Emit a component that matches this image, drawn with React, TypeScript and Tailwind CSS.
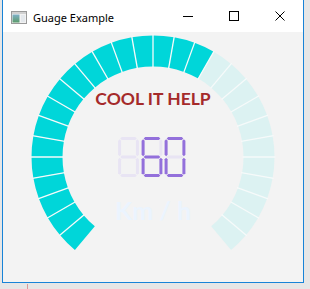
import React from "react";

const CX = 125;
const CY = 125;
const RO = 121.5;
const RI = 90.5;

function pt(r: number, deg: number): [number, number] {
  const a = (deg * Math.PI) / 180;
  return [CX + r * Math.sin(a), CY - r * Math.cos(a)];
}

function wedge(a0: number, a1: number): string {
  const [x0, y0] = pt(RO, a0);
  const [x1, y1] = pt(RO, a1);
  const [x2, y2] = pt(RI, a1);
  const [x3, y3] = pt(RI, a0);
  return `M${x0} ${y0} A${RO} ${RO} 0 0 1 ${x1} ${y1} L${x2} ${y2} A${RI} ${RI} 0 0 0 ${x3} ${y3} Z`;
}

function Gauge() {
  const segs = [] as React.ReactNode[];
  const total = 28;
  const lit = 17;
  for (let i = 0; i < total; i++) {
    const a0 = -140 + i * 10;
    segs.push(
      <path key={"s" + i} d={wedge(a0, a0 + 10)} fill={i < lit ? "#00d6d9" : "#dcf2f2"} />
    );
  }
  const lines = [] as React.ReactNode[];
  for (let k = 1; k < total; k++) {
    const a = -140 + k * 10;
    const [x0, y0] = pt(RI - 1, a);
    const [x1, y1] = pt(RO + 1, a);
    lines.push(
      <line key={"l" + k} x1={x0} y1={y0} x2={x1} y2={y1} stroke="#f6fafa" strokeWidth={1.3} />
    );
  }
  return (
    <svg width={250} height={250} viewBox="0 0 250 250" className="block">
      {segs}
      {lines}
    </svg>
  );
}

const SEGS: Record<string, string> = {
  "8": "abcdefg",
  "6": "acdefg",
  "0": "abcdef",
};

function hseg(x1: number, x2: number, y: number, h: number) {
  return `${x1},${y} ${x1 + h},${y - h} ${x2 - h},${y - h} ${x2},${y} ${x2 - h},${y + h} ${x1 + h},${y + h}`;
}
function vseg(x: number, y1: number, y2: number, h: number) {
  return `${x},${y1} ${x + h},${y1 + h} ${x + h},${y2 - h} ${x},${y2} ${x - h},${y2 - h} ${x - h},${y1 + h}`;
}

function Digit({ ch, x, on, off }: { ch: string; x: number; on: string; off: string }) {
  const h = 1.5;
  const w = 21;
  const H = 40;
  const L = 1.6;
  const R = w - 1.6;
  const polys: Record<string, string> = {
    a: hseg(2.2, w - 2.2, 1.6, h),
    b: vseg(R, 2.2, H / 2 - 0.7, h),
    c: vseg(R, H / 2 + 0.7, H - 2.2, h),
    d: hseg(2.2, w - 2.2, H - 1.6, h),
    e: vseg(L, H / 2 + 0.7, H - 2.2, h),
    f: vseg(L, 2.2, H / 2 - 0.7, h),
    g: hseg(2.2, w - 2.2, H / 2, h),
  };
  const litSet = SEGS[ch] || "";
  return (
    <g transform={`translate(${x},0)`}>
      {"abcdefg".split("").map((s) => (
        <polygon key={s} points={polys[s]} fill={litSet.includes(s) ? on : off} />
      ))}
    </g>
  );
}

function Display() {
  const off = "#e8e4f3";
  const on = "#9370db";
  return (
    <svg width={70} height={40} viewBox="0 0 70 40" className="block">
      <Digit ch="8" x={0} on={off} off={off} />
      <Digit ch="6" x={23.5} on={on} off={off} />
      <Digit ch="0" x={46.5} on={on} off={off} />
    </svg>
  );
}

function AppIcon() {
  return (
    <svg width={16} height={13} viewBox="0 0 16 13" className="block">
      <rect x={0.5} y={0.5} width={15} height={12} fill="#f2f2f2" stroke="#9a9a9a" />
      <rect x={1} y={1} width={14} height={2} fill="#d0d0d0" />
      <defs>
        <linearGradient id="ig" x1="0" y1="0" x2="0" y2="1">
          <stop offset="0" stopColor="#7fb0c8" />
          <stop offset="1" stopColor="#5a9a6a" />
        </linearGradient>
      </defs>
      <rect x={1.5} y={3.5} width={7} height={8} fill="url(#ig)" />
      <rect x={10} y={4} width={4} height={7} fill="#e4e8ec" />
    </svg>
  );
}

export default function App() {
  return (
    <div className="relative w-[310px] h-[289px] bg-[#e6e6e6] overflow-hidden">
      <div className="ml-[2px] w-[302px] h-[283px] flex flex-col border-l border-r border-b border-[#1883d7] bg-white">
        <div className="h-[32px] flex items-center bg-white shrink-0">
          <div className="ml-[8px] mt-[2px]">
            <AppIcon />
          </div>
          <span
            className="ml-[6px] text-[11px] text-black leading-none mt-[2px]"
            style={{ fontFamily: '"Segoe UI", "Noto Sans", "Open Sans", sans-serif' }}
          >
            Guage Example
          </span>
          <div className="ml-auto flex items-center h-full">
            <div className="w-[46px] h-full flex items-center justify-center">
              <div className="w-[10px] h-px bg-black" />
            </div>
            <div className="w-[46px] h-full flex items-center justify-center">
              <div className="w-[10px] h-[10px] border border-black" />
            </div>
            <div className="w-[46px] h-full flex items-center justify-center">
              <svg width={10} height={10} viewBox="0 0 10 10" className="block">
                <path d="M0.5 0.5 L9.5 9.5 M9.5 0.5 L0.5 9.5" stroke="#000" strokeWidth={1} />
              </svg>
            </div>
          </div>
        </div>
        <div className="flex-1 bg-[#f3f3f3] flex justify-center">
          <div className="relative w-[250px] h-[250px]">
            <Gauge />
            <div className="absolute inset-0 flex flex-col items-center pt-[58px]">
              <div
                className="text-[17.5px] leading-none font-bold text-[#a52a2a]"
                style={{ fontFamily: "Lato, sans-serif" }}
              >
                COOL IT HELP
              </div>
              <div className="mt-[29px]">
                <Display />
              </div>
              <div
                className="mt-[21px] text-[25px] leading-none font-bold text-[#ebf4fe]"
                style={{ fontFamily: "Lato, sans-serif" }}
              >
                Km / h
              </div>
            </div>
          </div>
        </div>
      </div>
      <div className="absolute left-[27px] top-[284px] w-px h-[5px] bg-[#d99a9a]" />
    </div>
  );
}
